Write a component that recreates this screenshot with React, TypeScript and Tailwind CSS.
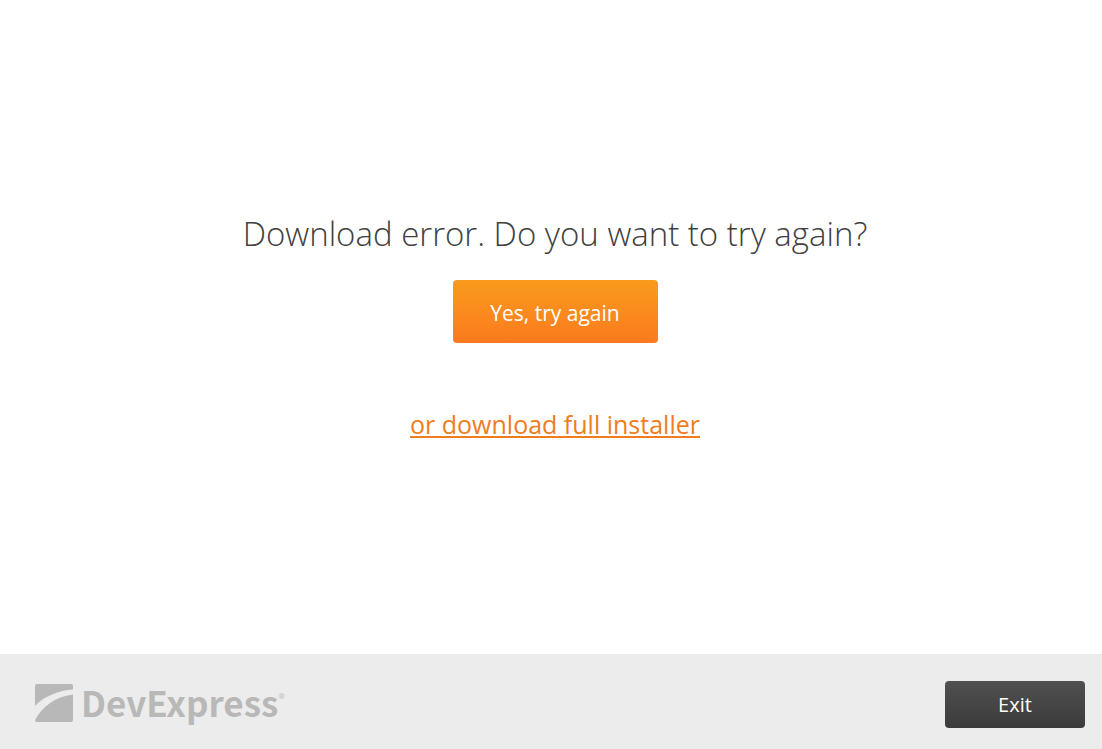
function Logo() {
  return (
    <div className="flex items-start gap-2 text-[#b8b8b8]">
      <svg viewBox="0 0 38 38" className="h-[38px] w-[38px]" fill="currentColor" aria-hidden="true">
        <path d="M2 0H36Q38 0 38 2V5.500C24 6.500 9 12 0 22V2Q0 0 2 0Z" />
        <path d="M38 10.500V36Q38 38 36 38H2Q0 38 0 36C7 23 20 12.500 38 10.500Z" />
      </svg>
      <div className="flex items-start">
        <span className="font-['Noto_Sans_CJK_SC','Open_Sans',sans-serif] text-[35px] leading-[36px] font-bold">
          DevExpress
        </span>
        <span className="text-[8px] leading-[24px]">®</span>
      </div>
    </div>
  );
}

export default function App() {
  return (
    <div className="flex min-h-screen flex-col bg-white font-['Open_Sans','Noto_Sans',sans-serif]">
      <main className="flex flex-1 flex-col items-center justify-center pb-1 pl-2">
        <h1 className="text-center text-[33px] leading-[48px] font-light text-[#404040]">
          Download error. Do you want to try again?
        </h1>
        <button
          type="button"
          className="mt-[22px] h-[63px] w-[205px] rounded bg-linear-to-b from-[#f99b1c] to-[#fb7a1e] pt-1.5 text-[21px] text-white"
        >
          Yes, try again
        </button>
        <a
          href="#full-installer"
          className="mt-16 text-[25px] leading-[34px] text-[#f07c20] underline decoration-2 underline-offset-2"
        >
          or download full installer
        </a>
      </main>
      <footer className="flex h-[95px] items-start justify-between bg-[#ececec] pt-[27px] pr-[17px] pl-[35px]">
        <div className="pt-[3px]">
          <Logo />
        </div>
        <button
          type="button"
          className="h-[47px] w-[140px] rounded bg-linear-to-b from-[#505050] to-[#3b3b3b] text-[20px] text-white"
        >
          Exit
        </button>
      </footer>
    </div>
  );
}
